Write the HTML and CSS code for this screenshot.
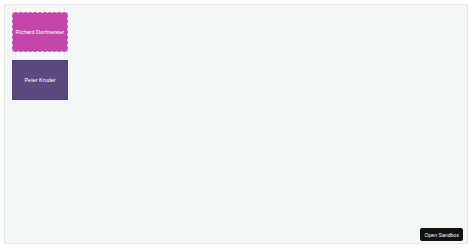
FILE: index.html
```html
<!DOCTYPE html>
<html>
<head>
<meta charset="utf-8">
<link rel="stylesheet" href="styles.css">
</head>
<body>
<div class="frame">
  <div class="list">
    <div class="card card-active">Richard Dorfmeister</div>
    <div class="card card-plain">Peter Kruder</div>
  </div>
  <button class="sandbox">Open Sandbox</button>
</div>
</body>
</html>
```
FILE: styles.css
```css
html, body {
  margin: 0;
  padding: 0;
  background: #ffffff;
  font-family: "Liberation Sans", Arial, sans-serif;
}
body {
  padding: 4px 6px 4px 4px;
  width: 474px;
  height: 248px;
  box-sizing: border-box;
}
.frame {
  position: relative;
  height: 240px;
  box-sizing: border-box;
  border: 1px solid #e6ebea;
  background: #f3f7f6;
  padding: 7px;
}
.list {
  display: flex;
  flex-direction: column;
  gap: 8px;
}
.card {
  width: 56px;
  height: 40px;
  box-sizing: border-box;
  display: flex;
  align-items: center;
  justify-content: center;
  color: #ffffff;
  font-size: 5.5px;
}
.card-active {
  background: #c445aa;
  border: 1px dashed #f1b3e4;
}
.card-plain {
  background: #5b4a80;
  border: 1px solid #4f4172;
}
.sandbox {
  position: absolute;
  right: 4px;
  bottom: 2px;
  height: 13px;
  padding: 0 4px;
  border: none;
  border-radius: 2px;
  background: #111111;
  color: #ffffff;
  font-family: "Liberation Sans", Arial, sans-serif;
  font-size: 5.2px;
}
```
